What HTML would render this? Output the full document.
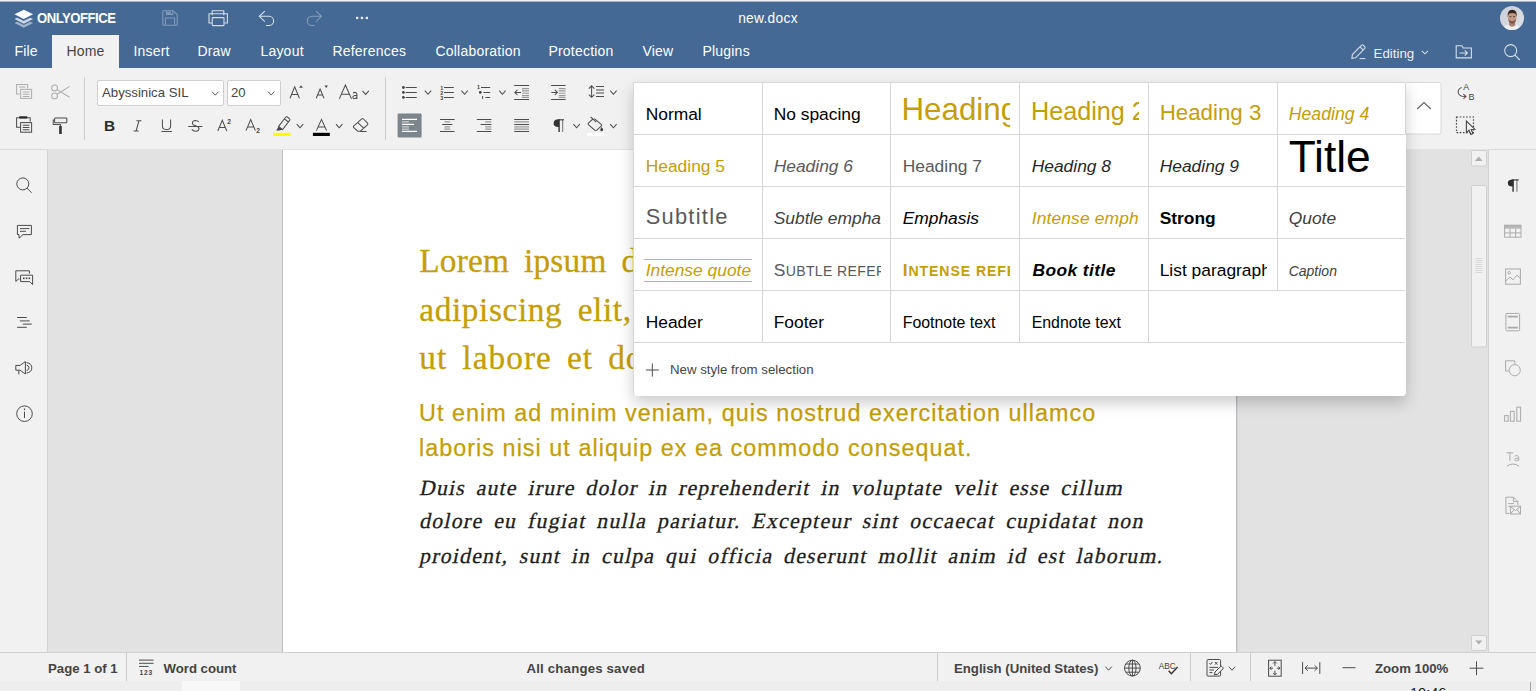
<!DOCTYPE html>
<html lang="en">
<head>
<meta charset="utf-8">
<title>new.docx - ONLYOFFICE</title>
<style>
html,body{margin:0;padding:0;}
body{width:1536px;height:691px;overflow:hidden;position:relative;background:#f1f1f1;font-family:"Liberation Sans",sans-serif;color:#444;}
.abs{position:absolute;}
#topstrip{left:0;top:0;width:1536px;height:2px;background:linear-gradient(#f3f3f3 0,#f3f3f3 50%,#a3b3ca 50%,#a3b3ca 100%);}
#header{left:0;top:2px;width:1536px;height:66px;background:#446995;}
#title{left:0;width:1536px;top:8.6px;text-align:center;color:#fff;font-size:13.75px;line-height:16px;letter-spacing:.3px;}
.tab{position:absolute;top:35px;height:33px;line-height:32px;color:#fff;font-size:14px;letter-spacing:.22px;white-space:nowrap;}
.tab.active{background:#f1f1f1;color:#444;}
#toolbar{left:0;top:68px;width:1536px;height:81px;background:#f1f1f1;border-bottom:1px solid #d9d9d9;}
#leftbar{left:0;top:150px;width:47px;height:502px;background:#f1f1f1;border-right:1px solid #d4d4d4;}
#rightbar{left:1488px;top:150px;width:48px;height:502px;background:#f1f1f1;border-left:1px solid #d4d4d4;box-sizing:border-box;}
#canvas{left:48px;top:149px;width:1440px;height:503px;background:#e2e2e2;overflow:hidden;}
#page{left:234px;top:1px;width:955px;height:520px;background:#fff;border-left:1px solid #bbbfc4;border-right:1px solid #bbbfc4;box-shadow:1px 0 0 rgba(187,191,196,.45);box-sizing:border-box;}
#status{left:0;top:652px;width:1536px;height:29px;background:#f1f1f1;border-top:1px solid #d0d0d0;box-sizing:border-box;}
#taskbar{left:0;top:681px;width:1536px;height:10px;background:#eeeeee;overflow:hidden;}

#dd{left:633px;top:82px;width:773px;height:314px;background:#fff;border:1px solid #d8d8d8;border-right-color:#fff;border-bottom-color:#fff;box-sizing:border-box;border-radius:0 0 4px 4px;box-shadow:0 7px 15px rgba(0,0,0,0.2);overflow:hidden;}
#dd .hl{position:absolute;left:0;width:771px;height:1px;background:#d8d8d8;}
#dd .vl{position:absolute;top:0;width:1px;height:259px;background:#d8d8d8;}
.cell{position:absolute;width:118px;height:51px;line-height:61.9px;font-size:17.4px;overflow:hidden;white-space:nowrap;color:#000;}
.cell span{line-height:0;margin-left:10.7px;}
.cell small{font-size:81%;}
.c0{left:1px}.c1{left:129px}.c2{left:257px;width:118px;padding-left:1px}.c3{left:386px;width:118px;padding-left:1px}.c4{left:515px}.c5{left:644px}
.r0{top:1px}.r1{top:53px}.r2{top:105px}.r3{top:157px}.r4{top:209px}
.gold{color:#c49e04}.g59{color:#595959}.g40{color:#404040}.g27{color:#272727}
.it{font-style:italic}.bd{font-weight:bold}
#newstyle{left:36px;top:279.3px;font-size:13.25px;line-height:16px;color:#444;white-space:nowrap;}

.ln{position:absolute;white-space:nowrap;height:40px;line-height:40px;}
.h1{font-family:"Liberation Serif",serif;font-size:33.3px;color:#c49e04;-webkit-text-stroke:.3px #c49e04;letter-spacing:0.45px;word-spacing:6.5px;}
.p2{font-family:"Liberation Sans",sans-serif;font-size:23.33px;color:#c49e04;letter-spacing:1.02px;-webkit-text-stroke:.25px #c49e04;}
.p3{font-family:"Liberation Serif",serif;font-size:21.67px;color:#1e1e1e;letter-spacing:1.17px;word-spacing:4.1px;transform:skewX(-12deg);-webkit-text-stroke:0.3px #1e1e1e;transform-origin:0 27.3px;}

svg{position:absolute;overflow:visible;}
.hi{fill:none;stroke:#fff;stroke-width:1.1;opacity:.78;}
#logo-t{left:36.6px;top:8.3px;font-weight:bold;font-size:14.5px;line-height:16px;color:#fff;letter-spacing:-0.55px;transform:scaleX(.905);transform-origin:0 0;}
#editing{left:1373.6px;top:44.4px;font-size:13.3px;line-height:16px;color:#fff;opacity:.9;}

#tb{left:0;top:68px;}
#tb .k{fill:none;stroke:#4c4c4c;stroke-width:1.02;}
#tb .g{fill:none;stroke:#444;stroke-width:1.1;opacity:.5;}
#tb .f{fill:#444;stroke:none;}
#tb text{fill:#444;font-family:"Liberation Sans",sans-serif;}
.cbx{position:absolute;background:#fff;border:1px solid #cfcfcf;border-radius:2px;box-sizing:border-box;height:26px;top:80px;font-size:13.2px;line-height:24px;color:#444;white-space:nowrap;}

#ov .k{fill:none;stroke:#4c4c4c;stroke-width:1.0;}
#ov .f{fill:#444;stroke:none;}
#ov text{fill:#444;font-family:"Liberation Sans",sans-serif;}
.st{position:absolute;top:660.5px;font-size:13.2px;line-height:16px;font-weight:bold;color:#444;white-space:nowrap;}
</style>
</head>
<body>
<div id="topstrip" class="abs"></div>
<div id="header" class="abs">
  <div id="title" class="abs">new.docx</div>
  <svg id="logo" style="left:13.6px;top:7.2px" width="19.6" height="19.4" viewBox="0 0 18.4 18.4">
    <path d="M9.2 17.8 L0.4 13.4 L3 12.1 L9.2 15.2 L15.4 12.1 L18 13.4 Z" fill="#fff" opacity=".5"/>
    <path d="M9.2 13.9 L0.4 9.5 L3 8.2 L9.2 11.3 L15.4 8.2 L18 9.5 Z" fill="#fff" opacity=".75"/>
    <path d="M9.2 0.6 L18 5.1 L9.2 9.6 L0.4 5.1 Z" fill="#fff"/>
  </svg>
  <div id="logo-t" class="abs">ONLYOFFICE</div>
  <svg style="left:162px;top:8px" width="16" height="16" viewBox="0 0 16 16" class="hi" opacity=".4">
    <g opacity=".42"><path d="M1.6 0.8 H11.2 L15.2 4.6 V14.4 Q15.2 15.2 14.4 15.2 H1.6 Q0.8 15.2 0.8 14.4 V1.6 Q0.8 0.8 1.6 0.8 Z"/>
    <path d="M3.4 15 V8 H12.6 V15"/><path d="M4.4 1 V4.4 H10.8 V1"/><rect x="5.2" y="1.6" width="3.6" height="2.2" fill="#fff" stroke="none"/></g>
  </svg>
  <svg style="left:208px;top:8px" width="20" height="16" viewBox="0 0 20 16" class="hi">
    <path d="M4.2 5.2 V0.8 H15.8 V5.2"/><path d="M4 13 H1 V3.8 H19.4 V13 H16.4"/><rect x="4.2" y="7.6" width="11.8" height="8" rx="0.6"/>
  </svg>
  <svg style="left:258px;top:8px" width="18" height="16" viewBox="0 0 18 16" class="hi">
    <path d="M6.8 1.2 L1.3 6.3 L6.8 11.6"/><path d="M1.3 6.3 H11 A4.6 4.6 0 0 1 11 15.5 H8"/>
  </svg>
  <svg style="left:306px;top:8px" width="18" height="16" viewBox="0 0 18 16" class="hi">
    <g opacity=".45"><path d="M10 1.2 L15.5 6.3 L10 11.6"/><path d="M15.5 6.3 H5.8 A4.6 4.6 0 0 0 5.8 15.5 H8.8"/></g>
  </svg>
  <svg style="left:355px;top:14px" width="14" height="4" viewBox="0 0 14 4"><g fill="#fff" opacity=".9"><rect x="1" y=".8" width="2.3" height="2.3"/><rect x="5.8" y=".8" width="2.3" height="2.3"/><rect x="10.7" y=".8" width="2.3" height="2.3"/></g></svg>
  <svg style="left:1500px;top:4px" width="24" height="24" viewBox="0 0 24 24">
    <defs><clipPath id="avc"><circle cx="12" cy="12" r="12"/></clipPath>
    <linearGradient id="avg" x1="0" y1="0" x2="1" y2="1"><stop offset="0" stop-color="#c9ced5"/><stop offset="1" stop-color="#dfe1e5"/></linearGradient></defs>
    <g clip-path="url(#avc)"><rect width="24" height="24" fill="url(#avg)"/>
    <path d="M1.5 24 Q3.5 19.6 8.6 19 L15.8 19 Q20.6 19.6 22.5 24 Z" fill="#eceef1"/>
    <path d="M9.2 15 H15.2 V19.6 Q12.2 21.8 9.2 19.6 Z" fill="#a87f6c"/>
    <ellipse cx="12.2" cy="11.6" rx="4.2" ry="5.8" fill="#c29882"/>
    <path d="M7.8 11.4 Q6.8 4 12.2 3.8 Q17.8 4 16.6 11.4 Q16.2 8.2 15.2 7.4 Q12.2 6.6 9.2 7.4 Q8.2 8.2 7.8 11.4 Z" fill="#35261f"/>
    <path d="M8.2 12.6 Q8.8 17.6 12.2 17.8 Q15.6 17.6 16.2 12.6 Q15.4 15.4 12.2 15.2 Q9 15.4 8.2 12.6 Z" fill="#5c4034" opacity=".75"/>
    <path d="M9.4 10.6 H11.4 M13 10.6 H15" stroke="#3a2a24" stroke-width=".9" fill="none" opacity=".8"/>
    </g>
  </svg>
  <svg style="left:1351px;top:42px" width="16" height="16" viewBox="0 0 16 16" class="hi">
    <path d="M0.9 14.3 L1.4 10.6 L10.6 1.2 Q11.4 0.5 12.2 1.2 L13.8 2.8 Q14.5 3.6 13.8 4.4 L4.6 13.8 Z"/><path d="M9 2.9 L12.2 6.1"/><path d="M8.6 14.6 H14.4"/>
  </svg>
  <div id="editing" class="abs">Editing</div>
  <svg style="left:1421px;top:48px" width="8" height="5" viewBox="0 0 8 5" class="hi"><path d="M0.8 0.8 L3.9 3.8 L7 0.8"/></svg>
  <svg style="left:1455px;top:43px" width="18" height="14" viewBox="0 0 18 14" class="hi">
    <path d="M1.2 0.8 H7 L8.2 3 H16.4 V12.9 H1.2 Z"/><path d="M4.6 8 H12.4 M9.8 5.4 L12.4 8 L9.8 10.6"/>
  </svg>
  <svg style="left:1503px;top:42px" width="18" height="18" viewBox="0 0 18 18" class="hi">
    <circle cx="7.7" cy="6.6" r="6"/><path d="M12 11.2 L16.8 16"/>
  </svg>

</div>
<div id="tabs">
  <div class="tab" style="left:14.4px">File</div>
  <div class="tab active" style="left:52px;width:67px;text-align:center">Home</div>
  <div class="tab" style="left:133.4px">Insert</div>
  <div class="tab" style="left:197.4px">Draw</div>
  <div class="tab" style="left:260.4px">Layout</div>
  <div class="tab" style="left:332.4px">References</div>
  <div class="tab" style="left:435.4px">Collaboration</div>
  <div class="tab" style="left:548.4px">Protection</div>
  <div class="tab" style="left:642.4px">View</div>
  <div class="tab" style="left:702.4px">Plugins</div>
</div>
<div id="toolbar" class="abs"></div>
<svg id="tb" width="1536" height="81" viewBox="0 68 1536 81">
<path d="M84.5 77.5 V140 M385.5 77.5 V140" stroke="#cbcbcb" stroke-width="1" fill="none"/>
<g opacity=".4"><path class="k" d="M19.6 94 H16.6 V84.6 H27.6 V88.4"/><rect class="k" x="20.6" y="89.4" width="11" height="9"/><path class="k" d="M22.8 92 H29.4 M22.8 94.2 H29.4 M22.8 96.4 H29.4" stroke-width=".7"/><path class="k" d="M18.8 87 H25.4" stroke-width=".7"/></g>
<g opacity=".4"><circle class="k" cx="54.6" cy="87.9" r="2.9"/><circle class="k" cx="54.6" cy="95.9" r="2.9"/><path class="k" d="M57 89.6 L69.6 97.2 M57 94.2 L69.6 86.4"/></g>
<path class="k" d="M20.2 127.2 H16.6 V117.8 H30.2 V121.6"/><path d="M19.2 117.4 H27.2" stroke="#222" stroke-width="2.2" fill="none"/><rect class="k" x="20.6" y="122.6" width="11" height="9.6"/><path class="k" d="M22.8 125.2 H29.4 M22.8 127.5 H29.4 M22.8 129.8 H29.4" stroke-width=".9"/>
<rect class="k" x="54.6" y="118" width="12.2" height="4.8" rx=".6" fill="#fafafa"/><path class="k" d="M54.6 120 H53.2 V124.4 H60.4 V126.4"/><path d="M60.45 126 V134" stroke="#333" stroke-width="2.6" fill="none"/>
<path class="k" d="M290 98.3 L294.7 86.8 L299.4 98.3 M291.6 94.4 H297.8" stroke-width="1.15"/><path class="f" d="M299.2 87.8 L301 85.2 L302.8 87.8 Z"/>
<path class="k" d="M316.2 98.3 L320.1 89 L324 98.3 M317.5 95 H322.7" stroke-width="1.1"/><path class="f" d="M324.4 85.4 L328 85.4 L326.2 88 Z"/>
<path class="k" d="M339.3 98.9 L345.4 85 L351.5 98.9 M341.4 94.2 H349.4" stroke-width="1.25"/><path class="k" d="M353 93.2 Q354.8 91.8 356.2 92.8 Q356.9 93.4 356.9 94.6 V98.9 M356.9 95.2 Q352.6 95.4 352.8 97.4 Q353.2 99 355 98.6 Q356.4 98.2 356.9 97" stroke-width="1.1"/>
<path class="k" d="M362.4 90.8 L365.6 94.4 L368.8 90.8"/>
<text x="104" y="131.3" font-size="15.4" font-weight="bold" style="fill:#2a2a2a">B</text>
<path class="k" d="M136.4 120.8 H141.4 M133.6 131 H138.6 M139 120.8 L136 131" stroke-width="1.15"/>
<path class="k" d="M162.4 119.4 V126 Q162.4 129.6 166.5 129.6 Q170.6 129.6 170.6 126 V119.4 M161.4 131.6 H171.8" stroke-width="1.15"/>
<path class="k" d="M198.8 121.8 Q197.6 120.4 195.4 120.4 Q192.4 120.6 192.4 123 Q192.4 125 195.6 125.8 Q199 126.8 199 128.8 Q199 131.2 195.6 131.2 Q193 131.2 191.8 129.4 M188.2 126.5 H202.4" stroke-width="1.15"/>
<path class="k" d="M217.8 131 L222.3 120.3 L226.8 131 M219.4 127.4 H225.2" stroke-width="1.15"/><text x="227.2" y="123.6" font-size="6.6" font-weight="bold">2</text>
<path class="k" d="M246 130.6 L250.7 119.6 L255.4 130.6 M247.6 127 H253.8" stroke-width="1.15"/><text x="256.2" y="133.4" font-size="6.6" font-weight="bold">2</text>
<path class="k" d="M278.6 126.4 L285.6 117.2 Q286.4 116.2 287.4 117 L289.4 118.6 Q290.4 119.4 289.6 120.4 L282.6 129.6 Z M284.4 118.8 L288.4 122"/><path class="f" d="M278.6 126.4 L282.6 129.6 L279.4 130.4 L276.2 130.6 Z"/><rect x="273.3" y="132.8" width="17.2" height="3.2" fill="#ffff00"/>
<path class="k" d="M296.8 124.2 L300.0 127.8 L303.2 124.2"/>
<path class="k" d="M316.4 130.6 L321.5 119.4 L326.6 130.6 M318 127 H325" stroke-width="1.15"/><rect x="312.9" y="132.8" width="16.9" height="3.2" fill="#000"/>
<path class="k" d="M336.0 124.2 L339.2 127.8 L342.4 124.2"/>
<path class="k" d="M357.6 131.2 L353.6 127.4 Q353 126.6 353.8 125.8 L361.8 118.8 Q362.6 118.2 363.4 119 L367.6 123.2 Q368.2 124 367.4 124.8 L360.4 131.2 Z M357.6 122.4 L363.6 128.2 M360 131.4 H366.6"/>
<g class="f"><circle cx="403.4" cy="87.5" r="1.4"/><circle cx="403.4" cy="92.4" r="1.4"/><circle cx="403.4" cy="97.4" r="1.4"/></g><path class="k" d="M405.6 87.5 H416.8 M405.6 92.4 H416.8 M405.6 97.4 H416.8"/>
<path class="k" d="M424.8 90.7 L428.0 94.3 L431.2 90.7"/>
<text x="440.2" y="89.6" font-size="5.4" font-weight="bold">1</text><text x="440.2" y="94.6" font-size="5.4" font-weight="bold">2</text><text x="440.2" y="99.6" font-size="5.4" font-weight="bold">3</text><path class="k" d="M444 87.5 H453.8 M444 92.4 H453.8 M444 97.4 H453.8"/>
<path class="k" d="M461.4 90.7 L464.6 94.3 L467.8 90.7"/>
<text x="477" y="89.4" font-size="5.4" font-weight="bold">1</text><path class="k" d="M481 87.5 H490.2 M483.4 92.4 H490.2 M485.4 97.4 H490.2"/><circle class="f" cx="480.3" cy="92.4" r="1.4"/><path class="k" d="M482.6 96 V99" stroke-width="1"/>
<path class="k" d="M499.2 90.7 L502.4 94.3 L505.6 90.7"/>
<path class="k" d="M514.2 85.4 H529 M514.2 99.5 H529"/><path class="g" d="M522 88.6 H529 M522 90.9 H529 M522 93.2 H529 M522 95.5 H529 M522 97.4 H529" stroke-width="1.1"/><path class="k" d="M521 92.4 H514.8 M517.4 89.8 L514.8 92.4 L517.4 95" stroke-width="1.1"/>
<path class="k" d="M551.1 85.4 H565.6 M551.1 99.5 H565.6"/><path class="g" d="M558.8 88.6 H565.6 M558.8 90.9 H565.6 M558.8 93.2 H565.6 M558.8 95.5 H565.6 M558.8 97.4 H565.6" stroke-width="1.1"/><path class="k" d="M551.4 92.4 H557.4 M554.8 89.8 L557.4 92.4 L554.8 95" stroke-width="1.1"/>
<path class="k" d="M591.6 86 V97.2 M588.8 88.6 L591.6 85.8 L594.4 88.6 M588.8 94.6 L591.6 97.4 L594.4 94.6" stroke-width="1.1"/><path class="k" d="M596 86.6 H604 M596 89.9 H604 M596 93.1 H604 M596 96.4 H604"/>
<path class="k" d="M610.2 90.7 L613.4 94.3 L616.6 90.7"/>
<rect x="397.6" y="113.6" width="24" height="23.8" rx="1.2" fill="#7d858c"/>
<path d="M402 119.4 H417 M402 124.4 H414 M402 131.4 H417" stroke="#fff" stroke-width="1.2" fill="none"/><path d="M402 121.9 H409 M402 126.9 H409 M402 129.1 H409" stroke="#fff" stroke-width="1.3" fill="none" opacity=".6"/>
<path class="k" d="M440 119.4 H454.6 M442.2 124.4 H452.4 M440 131.4 H454.6"/><path class="g" d="M444.4 121.9 H450.2 M444.4 126.9 H450.2 M444.4 129.1 H450.2" stroke-width="1.3"/>
<path class="k" d="M476.8 119.4 H491.4 M480.6 124.4 H491.4 M476.8 131.4 H491.4"/><path class="g" d="M485.2 121.9 H491.4 M485.2 126.9 H491.4 M485.2 129.1 H491.4" stroke-width="1.3"/>
<path class="k" d="M514.2 119.4 H529 M514.2 124.4 H529 M514.2 131.4 H529"/><path class="g" d="M514.2 121.9 H529 M514.2 126.9 H529 M514.2 129.1 H529" stroke-width="1.3"/>
<path class="f" d="M558.6 119.2 H563.9 V120.4 H558.6 Z" /><path d="M558.6 119.2 Q553.6 119.2 553.6 123.2 Q553.6 127 558.4 127 V132 H559.8 V119.2 Z" fill="#333"/><path d="M562.6 119.8 V132" stroke="#444" stroke-width="1.3" fill="none" opacity=".6"/>
<path class="k" d="M573.4 124.2 L576.6 127.8 L579.8 124.2"/>
<path class="k" d="M594.4 118.6 L601.4 124.6 Q602 125.4 601.4 126 L596.6 130.4 Q595.8 131 595 130.4 L588.4 124.6 Q587.8 123.8 588.4 123.2 L593.2 118.6 M590.6 116.8 L596.2 122.2"/><path class="f" d="M601.6 127 Q603.4 129.2 603.2 130 Q602.8 131.2 601.6 131.2 Q600.4 131.2 600.2 130 Q600.2 129.2 601.6 127 Z"/><rect x="587" y="133" width="17" height="2.8" fill="#fff"/>
<path class="k" d="M610.2 124.2 L613.4 127.8 L616.6 124.2"/>
<path d="M1405.5 82.5 H1439 Q1441 82.5 1441 84.5 V132 Q1441 134 1439 134 H1405.5 Z" fill="#fff" stroke="#d8d8d8" stroke-width="1"/>
<path d="M1417.2 109 L1424 102.6 L1430.8 109" fill="none" stroke="#666" stroke-width="1.2"/>
<text x="1463.2" y="90.3" font-size="8.8">A</text><text x="1468.6" y="100" font-size="9">B</text><path class="k" d="M1461.6 87.4 Q1457.2 89.6 1458.4 93.4 Q1459.8 96.8 1465.8 96.6 M1463.4 94.2 L1466 96.6 L1463.4 99" stroke-width="1.1"/>
<rect x="1456.5" y="117" width="17" height="15.6" fill="none" stroke="#444" stroke-width="1.2" stroke-dasharray="1.6 1.6"/><path d="M1466.4 121 V132.6 L1469 130.2 L1471 134.4 L1473 133.4 L1471.2 129.4 L1474.8 129.2 Z" fill="#f1f1f1" stroke="#444" stroke-width="1.1"/>
</svg>
<div class="cbx" style="left:97px;width:127px;padding-left:4px">Abyssinica SIL</div>
<div class="cbx" style="left:227px;width:54px;padding-left:3px">20</div>
<svg style="left:0;top:0" width="1536" height="150" viewBox="0 0 1536 150"><path d="M212 91.8 L215.2 95.2 L218.4 91.8 M268 91.6 L271.2 95 L274.4 91.6" fill="none" stroke="#505050" stroke-width=".95"/></svg>

<div id="leftbar" class="abs"></div>
<div id="canvas" class="abs">
  <div id="page" class="abs"></div>
<div class="ln h1" style="left:371.3px;top:91.76px;letter-spacing:0.2px">Lorem ipsum dolor sit amet, consectetur</div>
<div class="ln h1" style="left:371.3px;top:140.56px;letter-spacing:.62px;word-spacing:6.4px">adipiscing elit, sed do eiusmod tempor incididunt</div>
<div class="ln h1" style="left:371.3px;top:188.76px;letter-spacing:1.05px;word-spacing:5.7px">ut labore et dolore magna aliqua.</div>
<div class="ln p2" style="left:371.0px;top:244.02px;letter-spacing:1.06px">Ut enim ad minim veniam, quis nostrud exercitation ullamco</div>
<div class="ln p2" style="left:371.0px;top:278.82px;letter-spacing:1.05px">laboris nisi ut aliquip ex ea commodo consequat.</div>
<div class="ln p3" style="left:370.5px;top:318.79px;letter-spacing:1.24px">Duis aute irure dolor in reprehenderit in voluptate velit esse cillum</div>
<div class="ln p3" style="left:370.5px;top:352.49px;letter-spacing:1.32px">dolore eu fugiat nulla pariatur. Excepteur sint occaecat cupidatat non</div>
<div class="ln p3" style="left:370.5px;top:386.69px;letter-spacing:1.27px">proident, sunt in culpa qui officia deserunt mollit anim id est laborum.</div>

</div>
<div id="rightbar" class="abs"></div>

<div id="dd" class="abs">
  <div class="hl" style="top:51px"></div><div class="hl" style="top:103px"></div><div class="hl" style="top:155px"></div><div class="hl" style="top:207px"></div><div class="hl" style="top:259px"></div>
  <div class="vl" style="left:128px"></div><div class="vl" style="left:256px"></div><div class="vl" style="left:385px"></div><div class="vl" style="left:514px"></div><div class="vl" style="left:643px;height:207px"></div>
  <div class="cell r0 c0"><span>Normal</span></div>
  <div class="cell r0 c1"><span>No spacing</span></div>
  <div class="cell r0 c2 gold"><span style="font-size:31.3px;margin-left:9.5px">Heading 1</span></div>
  <div class="cell r0 c3 gold"><span style="font-size:25.2px;margin-left:10px">Heading 2</span></div>
  <div class="cell r0 c4 gold"><span style="font-size:22.3px">Heading 3</span></div>
  <div class="cell r0 c5 gold it"><span style="font-size:17.7px">Heading 4</span></div>
  <div class="cell r1 c0 gold"><span>Heading 5</span></div>
  <div class="cell r1 c1 g59 it"><span>Heading 6</span></div>
  <div class="cell r1 c2 g59"><span>Heading 7</span></div>
  <div class="cell r1 c3 g27 it"><span>Heading 8</span></div>
  <div class="cell r1 c4 g27 it"><span>Heading 9</span></div>
  <div class="cell r1 c5"><span style="font-size:44.3px">Title</span></div>
  <div class="cell r2 c0 g59"><span style="font-size:21.8px;letter-spacing:1.3px">Subtitle</span></div>
  <div class="cell r2 c1 g40 it"><span>Subtle emphasis</span></div>
  <div class="cell r2 c2 it"><span>Emphasis</span></div>
  <div class="cell r2 c3 gold it"><span style="letter-spacing:.15px">Intense emphasis</span></div>
  <div class="cell r2 c4 bd"><span>Strong</span></div>
  <div class="cell r2 c5 g40 it"><span>Quote</span></div>
  <div class="cell r3 c0 gold it"><span>Intense quote</span></div>
  <div class="cell r3 c1 g59"><span style="letter-spacing:.35px">S<small>UBTLE REFERENCE</small></span></div>
  <div class="cell r3 c2 gold bd"><span style="letter-spacing:.92px">I<small>NTENSE REFERENCE</small></span></div>
  <div class="cell r3 c3 bd it"><span style="letter-spacing:0.4px;margin-left:11.5px">Book title</span></div>
  <div class="cell r3 c4"><span>List paragraph</span></div>
  <div class="cell r3 c5 it" style="color:#44403a"><span style="font-size:14px">Caption</span></div>
  <div class="cell r4 c0"><span>Header</span></div>
  <div class="cell r4 c1"><span>Footer</span></div>
  <div class="cell r4 c2"><span style="font-size:15.9px">Footnote text</span></div>
  <div class="cell r4 c3"><span style="font-size:15.9px">Endnote text</span></div>
  <div class="abs" style="left:9.5px;top:176.2px;width:108.5px;height:1px;background:#c49e04;opacity:.75"></div><div class="abs" style="left:9.5px;top:197.9px;width:108.5px;height:1px;background:#c49e04;opacity:.75"></div>
  <div id="newstyle" class="abs">New style from selection</div>
</div>
<div id="status" class="abs"></div>
<div id="taskbar" class="abs"><div class="abs" style="left:182px;top:0;width:58px;height:10px;background:#f8f8f8"></div><div class="abs" style="left:1410px;top:4.2px;font-size:14.5px;line-height:16px;color:#222;white-space:nowrap">10:46</div><div class="abs" style="left:1530px;top:1px;width:1px;height:9px;background:#a2a2a2"></div></div>
<svg id="ov" style="left:0;top:0" width="1536" height="691" viewBox="0 0 1536 691">
<circle class="k" cx="22.8" cy="183.9" r="6"/><path class="k" d="M27.2 188.2 L31.6 192.8"/>
<path class="k" d="M17.4 225.4 H31.4 V234.6 H23 L19 238.2 V234.6 H17.4 Z M20 228.6 H29.4 M20 231.3 H26"/>
<path class="k" d="M19.6 279 H18.6 L15.8 281.4 V270.8 H29.4 V273.6"/><path class="k" d="M20.6 275.2 H32.6 V284.6 L29.8 281.6 H20.6 Z"/><g class="f"><rect x="23" y="277.5" width="1.6" height="1.6"/><rect x="25.8" y="277.5" width="1.6" height="1.6"/><rect x="28.6" y="277.5" width="1.6" height="1.6"/></g>
<path class="k" d="M17 317.5 H26.8 M19.8 320.9 H29.7 M22.8 324.1 H31.8 M17 327.3 H26.8"/>
<path class="k" d="M25.4 361.6 L20 365.4 H15.8 V370.2 H20 L25.4 374 Z M18.8 370.4 V374.4"/><path class="k" d="M26.6 362.6 Q31.8 363.4 31.8 367.8 Q31.8 372.2 26.6 373 M26.6 365 Q29 365.6 29 367.8 Q29 370 26.6 370.6" stroke-width="1.05"/>
<circle class="k" cx="24.5" cy="413.7" r="7.8"/><path class="k" d="M24.5 411.6 V418"/><rect class="f" x="23.9" y="408.6" width="1.3" height="1.4"/>
<path d="M1512.6 179.4 Q1507.8 179.4 1507.8 183 Q1507.8 186.6 1512.4 186.6 V191.8 H1513.8 V179.4 Z" fill="#2e2e2e"/><path d="M1512 179.4 H1518.7 V180.5 H1512 Z" fill="#2e2e2e"/><path d="M1516.9 179.8 V191.8" stroke="#444" stroke-width="1.3" fill="none" opacity=".6"/>
<g opacity=".42">
<rect class="k" x="1504.6" y="225.2" width="16.4" height="12"/><rect class="f" x="1504.6" y="225.2" width="16.4" height="3.4" opacity=".8"/><path class="k" d="M1504.6 232.9 H1521 M1510 228.6 V237.2 M1515.6 228.6 V237.2" stroke-width="1"/>
<rect class="k" x="1505.6" y="269" width="14.8" height="15.2"/><circle class="k" cx="1509.2" cy="272.8" r="1.3" stroke-width="1"/><path class="k" d="M1505.6 281 L1510 277 L1513 279.8 L1517 275.2 L1520.4 278.6" stroke-width="1"/>
<rect class="k" x="1505.9" y="313.4" width="13.7" height="17.4" rx="1"/><path d="M1507.8 316.6 H1517.8 M1507.8 327.6 H1517.8" stroke="#444" stroke-width="1.8" fill="none"/>
<path class="k" d="M1508.8 371 H1505.6 V360.8 H1514.8 V364"/><circle class="k" cx="1514.7" cy="370.2" r="5.6"/>
<rect class="k" x="1504.6" y="415.6" width="3.6" height="5.6"/><rect class="k" x="1510.4" y="411.4" width="3.8" height="9.8"/><rect class="k" x="1516.8" y="407.2" width="3.8" height="14"/>
<path class="k" d="M1506.4 452.8 H1513.4 M1509.9 452.8 V460.8" stroke-width="1.1"/><path class="k" d="M1514.8 456.2 Q1516.4 455 1517.8 455.8 Q1518.7 456.4 1518.7 457.6 V460.8 M1518.7 458 Q1514.4 458 1514.6 459.8 Q1515 461.2 1516.6 460.8 Q1518 460.4 1518.7 459.2" stroke-width="1"/><path class="k" d="M1506.8 466.2 Q1513 461.8 1519.2 466.2" stroke-width="1"/>
<path class="k" d="M1509.4 513.4 H1505.9 V497.2 H1513.6 L1517.8 501.4 V505"/><path class="k" d="M1513.4 497.4 V501.6 H1517.6 M1508.2 503.6 H1514 M1508.2 506.4 H1510" stroke-width="1"/><rect class="k" x="1510.5" y="506.2" width="10" height="7.8" fill="#f1f1f1"/><path class="k" d="M1510.5 506.4 L1515.5 510.6 L1520.5 506.4 M1510.5 514 L1514 509.6 M1520.5 514 L1517 509.6" stroke-width=".9"/>
</g>
<rect x="1471.5" y="150.5" width="15" height="15.5" rx="1.2" fill="#f1f1f1" stroke="#cfcfcf"/><path d="M1474.9 160.9 L1478.8 156.6 L1482.7 160.9 Z" fill="#adadad"/>
<rect x="1471.5" y="185.5" width="15" height="161.5" rx="1.2" fill="#f1f1f1" stroke="#cfcfcf"/>
<path d="M1475.5 258.5 H1482.5 M1475.5 260.5 H1482.5 M1475.5 262.5 H1482.5 M1475.5 264.5 H1482.5 M1475.5 266.5 H1482.5 M1475.5 268.5 H1482.5 M1475.5 270.5 H1482.5 M1475.5 272.5 H1482.5" stroke="#d9d9d9" stroke-width="1" fill="none"/>
<rect x="1471.5" y="635.5" width="15" height="15" rx="1.2" fill="#f1f1f1" stroke="#cfcfcf"/><path d="M1475.2 640.4 L1482.4 640.4 L1478.8 644.6 Z" fill="#adadad"/>
<path d="M126.5 652.5 V681 M937.5 652.5 V681 M1190.5 652.5 V681 M1250.5 652.5 V681" stroke="#cbcbcb" stroke-width="1" fill="none"/>
<path class="k" d="M139 660.1 H153.6 M139 663.3 H153.6 M139 666.4 H148.6" stroke-width="1.05"/><text x="139.4" y="674.8" font-size="6.6" font-weight="bold" letter-spacing=".9">123</text>
<path class="k" d="M1105.4 666.6 L1108.6 670.2 L1111.8 666.6" stroke-width="1.10"/>
<circle class="k" cx="1132.4" cy="668.1" r="7.9" stroke-width="1.1"/><ellipse class="k" cx="1132.4" cy="668.1" rx="3.6" ry="7.9" stroke-width="1"/><path class="k" d="M1132.4 660.2 V676 M1124.5 668.1 H1140.3 M1125.8 664 H1139 M1125.8 672.2 H1139" stroke-width="1"/>
<text x="1158.8" y="668.5" font-size="9.4" textLength="17" lengthAdjust="spacingAndGlyphs">ABC</text><path d="M1168.6 670.8 L1171.4 673.8 L1177.6 667" fill="none" stroke="#333" stroke-width="1.4"/>
<rect class="k" x="1207" y="659.5" width="13.6" height="16.6" rx="1"/><path class="k" d="M1209.4 663.2 L1210.6 664.4 L1212.4 662 M1215 662 L1217.4 664.6 M1217.4 662 L1215 664.6" stroke-width="1"/><path class="k" d="M1209.4 667.4 H1218 M1209.4 670 H1214 M1209.4 672.6 H1212.4" stroke-width="1"/><path d="M1214.4 674.8 L1215 672 L1220.6 666.4 Q1221.2 665.9 1221.8 666.4 L1223 667.6 Q1223.5 668.2 1223 668.8 L1217.4 674.4 Z" fill="#f1f1f1" stroke="#444" stroke-width="1"/>
<path class="k" d="M1228.8 666.6 L1232.0 670.2 L1235.2 666.6" stroke-width="1.10"/>
<rect class="k" x="1268.6" y="660.2" width="12.6" height="16"/><path class="k" d="M1274.9 661.6 V665.8 M1273.1 663.4 L1274.9 661.6 L1276.7 663.4 M1274.9 674.8 V670.6 M1273.1 673 L1274.9 674.8 L1276.7 673 M1269.8 668.2 H1273 M1271.4 666.6 L1269.8 668.2 L1271.4 669.8 M1280 668.2 H1276.8 M1278.4 666.6 L1280 668.2 L1278.4 669.8" stroke-width=".9"/>
<path class="k" d="M1302.6 662.2 V674 M1319.8 662.2 V674 M1305 668.1 H1317.4 M1307.8 665.4 L1305 668.1 L1307.8 670.8 M1314.6 665.4 L1317.4 668.1 L1314.6 670.8" stroke-width="1.1"/>
<path class="k" d="M1342.5 667.7 H1355.5 M1469.6 668.2 H1483.4 M1476.5 661.3 V675.1" stroke-width="1.1"/>
<path class="k" d="M645.8 370 H658.8 M652.3 363.4 V376.6" stroke-width="1.1"/>
<path d="M1405.5 83 V134.5" stroke="#d6d6d6" stroke-width="1" fill="none"/>
</svg>
<div class="st" style="left:48px">Page 1 of 1</div>
<div class="st" style="left:163.5px">Word count</div>
<div class="st" style="left:526.5px;letter-spacing:.2px">All changes saved</div>
<div class="st" style="left:954px">English (United States)</div>
<div class="st" style="left:1375px">Zoom 100%</div>

</body>
</html>
